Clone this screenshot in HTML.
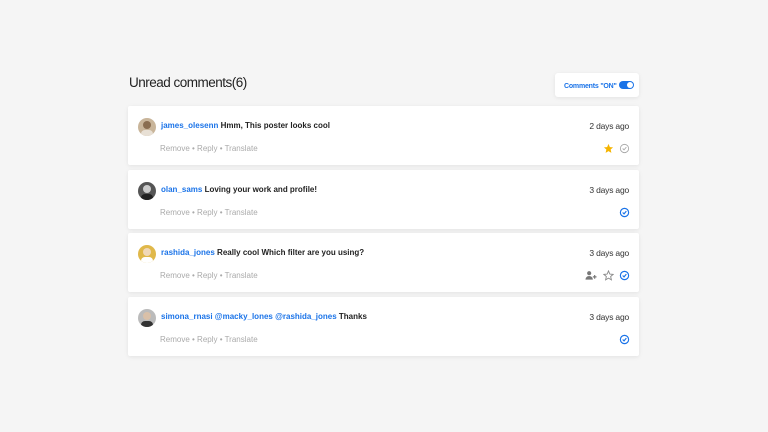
<!DOCTYPE html>
<html><head><style>
*{margin:0;padding:0;box-sizing:border-box}
body{width:768px;height:432px;background:#f5f5f5;font-family:"Liberation Sans",sans-serif;position:relative;overflow:hidden}
h1{position:absolute;left:129px;top:75px;font-size:13.5px;font-weight:normal;color:#222;letter-spacing:-0.5px}
.tog{position:absolute;left:555px;top:73px;width:84px;height:24px;background:#fff;border-radius:3px;box-shadow:0 1px 4px rgba(0,0,0,.08);font-size:7px;font-weight:bold;color:#1a73e8;padding:9.5px 0 0 9px;letter-spacing:-0.2px;white-space:nowrap}
.sw{position:absolute;left:64px;top:8px;width:15px;height:8px;border-radius:4px;background:#1a73e8}
.sw:after{content:"";position:absolute;right:1px;top:1px;width:6px;height:6px;border-radius:50%;background:#fff}
.card{position:absolute;left:128px;width:511px;height:59px;background:#fff;border-radius:2px;box-shadow:0 1px 4px rgba(0,0,0,.08)}
.av{position:absolute;left:10px;top:12px;width:18px;height:18px;border-radius:50%;overflow:hidden}
.t{position:absolute;left:33px;top:15px;font-size:8px;font-weight:bold;color:#222;letter-spacing:0}
.t b{color:#1a73e8}
.a{position:absolute;left:32px;top:38px;font-size:8px;color:#aaa;letter-spacing:0}
.d{position:absolute;right:10px;top:15px;font-size:8.5px;color:#333;letter-spacing:-0.2px}
.ic{position:absolute;top:37px}
</style></head><body>
<h1>Unread comments(6)</h1>
<div class="tog">Comments "ON"<div class="sw"></div></div>

<div class="card" style="top:106px">
<div class="av" style="background:#c9b59a"><svg width="18" height="18"><circle cx="9" cy="7" r="4" fill="#8a6d50"/><rect x="3" y="12" width="12" height="8" rx="4" fill="#e8e0d5"/></svg></div>
<div class="t"><b>james_olesenn</b> Hmm, This poster looks cool</div>
<div class="a">Remove • Reply • Translate</div>
<div class="d">2 days ago</div>
<svg class="ic" style="left:475px" width="11" height="11" viewBox="0 0 24 24"><path d="M12 2l3 7 7 .6-5.3 4.7 1.6 7.2L12 17.8 5.7 21.5l1.6-7.2L2 9.6 9 9z" fill="#f5b400"/></svg>
<svg class="ic" style="left:491px" width="11" height="11" viewBox="0 0 24 24"><circle cx="12" cy="12" r="9" fill="none" stroke="#aaa" stroke-width="2"/><path d="M8 12l3 3 5-6" fill="none" stroke="#aaa" stroke-width="2"/></svg>
</div>

<div class="card" style="top:170px">
<div class="av" style="background:#555"><svg width="18" height="18"><circle cx="9" cy="7" r="4" fill="#ccc"/><rect x="3" y="12" width="12" height="8" rx="4" fill="#222"/></svg></div>
<div class="t"><b>olan_sams</b> Loving your work and profile!</div>
<div class="a">Remove • Reply • Translate</div>
<div class="d">3 days ago</div>
<svg class="ic" style="left:491px" width="11" height="11" viewBox="0 0 24 24"><circle cx="12" cy="12" r="9" fill="none" stroke="#1a73e8" stroke-width="2.5"/><path d="M8 12l3 3 5-6" fill="none" stroke="#1a73e8" stroke-width="2.5"/></svg>
</div>

<div class="card" style="top:233px">
<div class="av" style="background:#e0b84a"><svg width="18" height="18"><circle cx="9" cy="7" r="4" fill="#f0d8b8"/><rect x="3" y="12" width="12" height="8" rx="4" fill="#fff"/></svg></div>
<div class="t"><b>rashida_jones</b> Really cool Which filter are you using?</div>
<div class="a">Remove • Reply • Translate</div>
<div class="d">3 days ago</div>
<svg class="ic" style="left:457px" width="12" height="11" viewBox="0 0 26 24"><circle cx="9" cy="7" r="4.5" fill="#777"/><path d="M1 21c0-5 4-8 8-8s8 3 8 8z" fill="#777"/><path d="M21 11v8M17 15h8" stroke="#777" stroke-width="2.5"/></svg>
<svg class="ic" style="left:475px" width="11" height="11" viewBox="0 0 24 24"><path d="M12 2l3 7 7 .6-5.3 4.7 1.6 7.2L12 17.8 5.7 21.5l1.6-7.2L2 9.6 9 9z" fill="none" stroke="#888" stroke-width="2"/></svg>
<svg class="ic" style="left:491px" width="11" height="11" viewBox="0 0 24 24"><circle cx="12" cy="12" r="9" fill="none" stroke="#1a73e8" stroke-width="2.5"/><path d="M8 12l3 3 5-6" fill="none" stroke="#1a73e8" stroke-width="2.5"/></svg>
</div>

<div class="card" style="top:297px">
<div class="av" style="background:#bbb"><svg width="18" height="18"><circle cx="9" cy="7" r="4" fill="#d9c0a8"/><rect x="3" y="12" width="12" height="8" rx="4" fill="#333"/></svg></div>
<div class="t"><b>simona_rnasi @macky_lones @rashida_jones</b> Thanks</div>
<div class="a">Remove • Reply • Translate</div>
<div class="d">3 days ago</div>
<svg class="ic" style="left:491px" width="11" height="11" viewBox="0 0 24 24"><circle cx="12" cy="12" r="9" fill="none" stroke="#1a73e8" stroke-width="2.5"/><path d="M8 12l3 3 5-6" fill="none" stroke="#1a73e8" stroke-width="2.5"/></svg>
</div>
</body></html>
